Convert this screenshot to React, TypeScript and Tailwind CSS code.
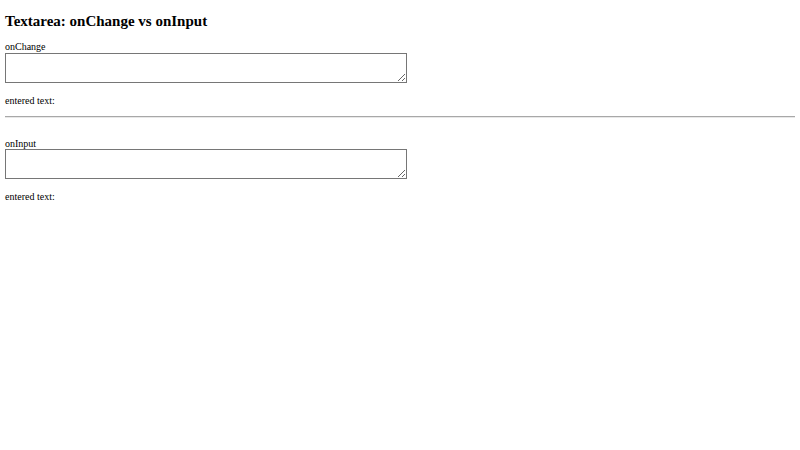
import React, { useState } from "react";

export default function App() {
  const [a, setA] = useState("");
  const [b, setB] = useState("");
  return (
    <div
      className="min-h-[450px] bg-white px-[5px] pt-[13px] text-black text-[10px]"
      style={{ fontFamily: '"Liberation Serif", "Times New Roman", serif' }}
    >
      <h2 className="m-0 text-[15px] font-bold leading-[17px]">Textarea: onChange vs onInput</h2>
      <div className="mt-[11.2px] leading-[12px]">onChange</div>
      <textarea
        value={a}
        onChange={(e) => setA(e.target.value)}
        className="block w-[402px] h-[29.4px] border border-[#767676] bg-white p-[1px] text-[10px]"
      />
      <div className="mt-[12.3px] leading-[12px]">entered text: {a}</div>
      <div className="mt-[9px] h-[2px] border-t border-b border-t-[#a8a8a8] border-b-[#e8e8e8]" />
      <div className="mt-[19.9px] leading-[12px]">onInput</div>
      <textarea
        onInput={(e) => setB((e.target as HTMLTextAreaElement).value)}
        className="-mt-[0.6px] block w-[402px] h-[29.4px] border border-[#767676] bg-white p-[1px] text-[10px]"
      />
      <div className="mt-[12.6px] leading-[12px]">entered text: {b}</div>
    </div>
  );
}
